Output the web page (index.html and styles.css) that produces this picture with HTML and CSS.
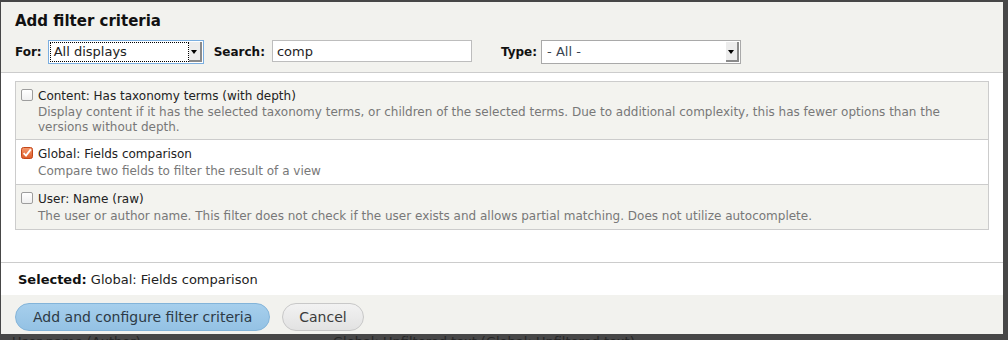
FILE: index.html
```html
<!DOCTYPE html>
<html lang="en">
<head>
    <meta charset="UTF-8">
    <title>Add filter criteria</title>
    <link rel="stylesheet" href="styles.css">
</head>
<body>

    <div class="dialog">
        <div class="dialog-head">
            <h1>Add filter criteria</h1>
            <div class="filters">
                <label class="label">For:</label>
                <div class="select select-focus">
                    <span class="select-value">All displays</span>
                    <span class="select-arrow"></span>
                </div>
                <label class="label label-search">Search:</label>
                <input type="text" class="textfield" value="comp">
                <label class="label label-type">Type:</label>
                <div class="select select-type">
                    <span class="select-value">- All -</span>
                    <span class="select-arrow"></span>
                </div>
            </div>
        </div>

        <div class="dialog-body">
            <div class="options">
                <div class="option odd">
                    <span class="checkbox"></span>
                    <div class="option-text">
                        <div class="option-title">Content: Has taxonomy terms (with depth)</div>
                        <div class="option-desc">Display content if it has the selected taxonomy terms, or children of the selected terms. Due to additional complexity, this has fewer options than the versions without depth.</div>
                    </div>
                </div>
                <div class="option even">
                    <svg class="checkbox-checked" width="12" height="12" viewBox="0 0 12 12">
                        <defs>
                            <linearGradient id="orange" x1="0" y1="0" x2="0" y2="1">
                                <stop offset="0" stop-color="#f59a6f"/>
                                <stop offset="1" stop-color="#dd5a26"/>
                            </linearGradient>
                        </defs>
                        <rect x="0.5" y="0.5" width="11" height="11" rx="2" fill="url(#orange)" stroke="#c2471a"/>
                        <path d="M2.6 6.2 L5 8.6 L9.8 2.4" fill="none" stroke="#fff" stroke-width="1.8"/>
                    </svg>
                    <div class="option-text">
                        <div class="option-title">Global: Fields comparison</div>
                        <div class="option-desc">Compare two fields to filter the result of a view</div>
                    </div>
                </div>
                <div class="option odd">
                    <span class="checkbox"></span>
                    <div class="option-text">
                        <div class="option-title">User: Name (raw)</div>
                        <div class="option-desc">The user or author name. This filter does not check if the user exists and allows partial matching. Does not utilize autocomplete.</div>
                    </div>
                </div>
            </div>
        </div>

        <div class="selected"><b>Selected:</b> Global: Fields comparison</div>

        <div class="actions">
            <button class="button button-primary">Add and configure filter criteria</button>
            <button class="button">Cancel</button>
        </div>
    </div>

    <div class="backdrop-row">
        <span class="backdrop-first">User name (Author)</span>
        <span>Global: Unfiltered text (Global: Unfiltered text)</span>
    </div>

</body>
</html>
```

FILE: styles.css
```css
body {
    margin: 0;
    padding-top: 2px;
    background-color: #474747;
    font-family: "DejaVu Sans", Verdana, sans-serif;
    color: #222;
    overflow: hidden;
}
.dialog {
    margin: 0 5px 0 1px;
    background: #fff;
}
.dialog-head {
    background: #f2f2ee;
    padding: 9px 14px 8px;
    border-bottom: 1px solid #ccc;
}
h1 {
    margin: 0;
    font-size: 15px;
    line-height: 20px;
    color: #111;
}
.filters {
    display: flex;
    align-items: center;
    height: 24px;
    margin-top: 9px;
}
.label {
    font-size: 12px;
    font-weight: bold;
    color: #111;
    margin-right: 6px;
}
.label-search {
    margin-left: 10px;
    margin-right: 7px;
}
.label-type {
    margin-left: 29px;
    margin-right: 4px;
}
.select {
    display: flex;
    box-sizing: border-box;
    width: 156px;
    height: 24px;
    border: 1px solid #a9a9a9;
    background: #fff;
    padding: 1px;
}
.select-focus {
    border-color: #7aaee0;
}
.select-type {
    width: 200px;
    margin-top: -1px;
}
.select-value {
    flex: 1;
    font-size: 13px;
    line-height: 20px;
    padding-left: 4px;
    color: #222;
}
.select-focus .select-value {
    outline: 1px dotted #000;
    outline-offset: -1px;
}
.select-type .select-value {
    color: #3a4450;
}
.select-arrow {
    position: relative;
    width: 11px;
    background: #ececec;
    border-right: 2px solid #8a8a8a;
    border-bottom: 2px solid #8a8a8a;
}
.select-arrow::after {
    content: "";
    position: absolute;
    left: 2px;
    top: 8px;
    border-left: 3px solid transparent;
    border-right: 3px solid transparent;
    border-top: 4px solid #000;
}
.textfield {
    box-sizing: border-box;
    width: 200px;
    height: 22px;
    margin: -2px 0 0 0;
    border: 1px solid #bdbdbd;
    padding: 0 4px;
    font-family: "DejaVu Sans", Verdana, sans-serif;
    font-size: 13px;
    color: #222;
    outline: none;
}
.dialog-body {
    box-sizing: border-box;
    height: 190px;
    padding: 8px 14px 0;
    border-bottom: 1px solid #ccc;
}
.options {
    border: 1px solid #ccc;
}
.option {
    display: flex;
    padding: 6px 6px 5px 5px;
    border-top: 1px solid #ccc;
    font-size: 12px;
    line-height: 16px;
}
.option:first-child {
    border-top: none;
    padding-bottom: 4px;
}
.odd { background: #f3f3ef; }
.even { background: #fff; }
.checkbox, .checkbox-checked {
    flex: none;
    box-sizing: border-box;
    width: 12px;
    height: 12px;
    margin: 1px 5px 0 0;
}
.checkbox {
    border: 1px solid #9d9d9d;
    border-radius: 2px;
    background: linear-gradient(#fff, #f0f0f0);
}
.option-title {
    color: #222;
}
.option-desc {
    margin-top: 1px;
    color: #787878;
}
.option:first-child .option-desc {
    line-height: 15px;
}
.selected {
    padding: 9px 17px 7px;
    font-size: 13px;
    line-height: 16px;
    color: #222;
}
.selected b {
    color: #111;
}
.actions {
    display: flex;
    gap: 12px;
    background: #f2f2ee;
    padding: 8px 14px 3px;
}
.button {
    height: 28px;
    padding: 0 16px;
    border: 1px solid #c8c8c8;
    border-radius: 14px;
    background: linear-gradient(#f2f2f2, #e2e2e2);
    font-family: "DejaVu Sans", Verdana, sans-serif;
    font-size: 14px;
    color: #3b3b3b;
}
.button-primary {
    padding: 0 17px;
    border-color: #83b4d9;
    background: linear-gradient(#a6cfec, #94c2e4);
    color: #2d3a46;
}
.backdrop-row {
    display: flex;
    padding-left: 12px;
    font-size: 13px;
    line-height: 16px;
    color: #262626;
}
.backdrop-first {
    width: 321px;
}
```
